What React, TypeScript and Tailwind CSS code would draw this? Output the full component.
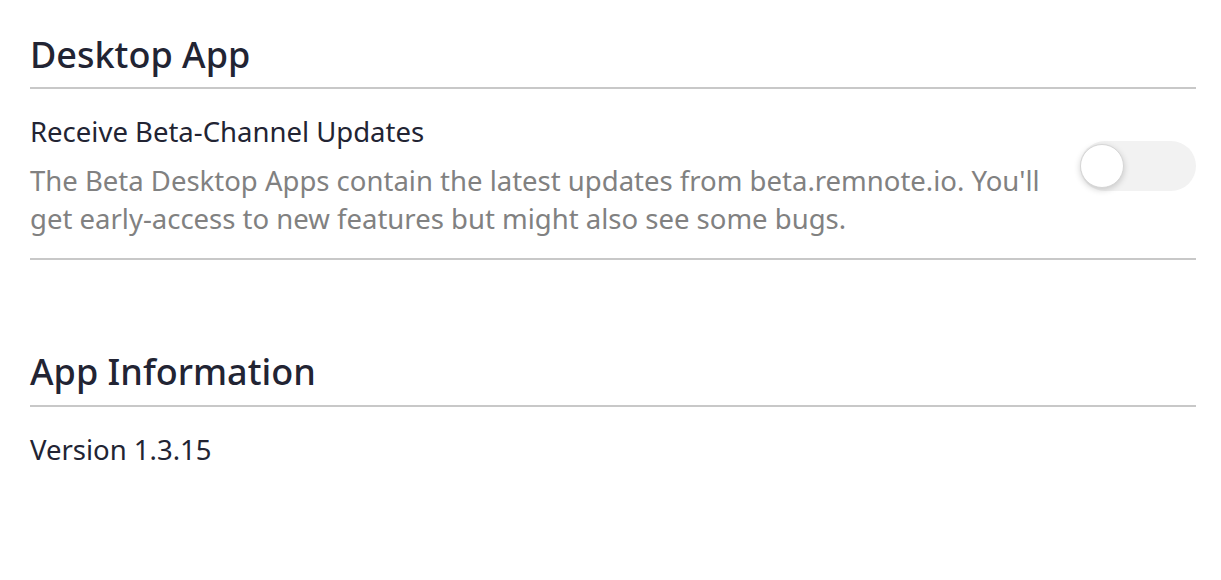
import React from 'react';

function Toggle({ on = false }: { on?: boolean }) {
    return (
        <button
            role="switch"
            aria-checked={on}
            className="relative h-[50px] w-[116px] shrink-0 rounded-full bg-[#f2f2f2]"
        >
            <span className="absolute left-0 top-[3px] h-[44px] w-[44px] rounded-full border border-[#d6d6d6] bg-white shadow-[0_2px_6px_rgba(0,0,0,0.18)]" />
        </button>
    );
}

export default function App() {
    return (
        <div className="min-h-screen bg-white pl-[30px] pr-[25px] pt-[32px] text-[#222433] [font-family:'Noto_Sans',sans-serif]">
            <section>
                <h2 className="border-b-2 border-[#c8c8c8] pb-[9px] text-[36px] font-medium leading-[46px]">Desktop App</h2>
                <div className="flex items-start justify-between gap-6 border-b-2 border-[#c8c8c8] pb-[20px] pt-[24px]">
                    <div>
                        <p className="text-[27.5px] leading-[38px]">Receive Beta-Channel Updates</p>
                        <p className="mt-[11px] text-[27.5px] leading-[38px] text-[#818181]">
                            The Beta Desktop Apps contain the latest updates from beta.remnote.io. You'll
                            <br />
                            get early-access to new features but might also see some bugs.
                        </p>
                    </div>
                    <div className="pt-[28px]">
                        <Toggle />
                    </div>
                </div>
            </section>
            <section className="mt-[89px]">
                <h2 className="border-b-2 border-[#c8c8c8] pb-[10px] text-[36px] font-medium leading-[46px]">App Information</h2>
                <p className="pt-[24px] text-[27.5px] leading-[38px]">Version 1.3.15</p>
            </section>
        </div>
    );
}
